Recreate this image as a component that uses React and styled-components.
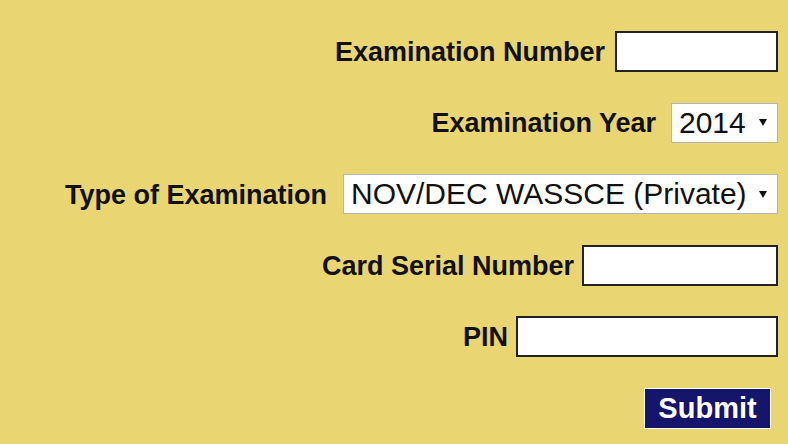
import React from "react";
import styled, { createGlobalStyle } from "styled-components";

const Global = createGlobalStyle`
  html, body { margin: 0; padding: 0; background: #e9d673; }
  body { font-family: "Liberation Sans", Arial, sans-serif; }
`;

const Page = styled.form`
  width: 788px;
  height: 444px;
  box-sizing: border-box;
  padding: 16px 10px 0 0;
  display: flex;
  flex-direction: column;
  align-items: flex-end;
`;

const Row = styled.div`
  height: 72px;
  display: flex;
  align-items: center;
  gap: ${(p) => p.$gap}px;
`;

const Label = styled.label`
  font-size: 27px;
  font-weight: bold;
  color: #111;
  padding-top: 2px;
`;

const TextBox = styled.input`
  box-sizing: border-box;
  width: ${(p) => p.$w}px;
  height: 41px;
  border: 2px solid #222;
  background: #fff;
  margin: 0;
  padding: 0 6px;
  font-size: 24px;
  font-family: "Liberation Sans", Arial, sans-serif;
`;

const SelectBox = styled.div`
  box-sizing: border-box;
  width: ${(p) => p.$w}px;
  height: 40px;
  border: 1px solid #b5b5b5;
  background: #fff;
  display: flex;
  align-items: center;
  justify-content: space-between;
  padding: 0 10px 0 7px;
  font-size: 30px;
  color: #111;
`;

const Arrow = styled.span`
  width: 0;
  height: 0;
  border-left: 4px solid transparent;
  border-right: 4px solid transparent;
  border-top: 7px solid #111;
`;

const SubmitRow = styled.div`
  height: 72px;
  display: flex;
  align-items: center;
  padding-right: 7px;
`;

const Submit = styled.button`
  box-sizing: border-box;
  width: 127px;
  height: 41px;
  background: #15156b;
  color: #fff;
  border: 1px solid #fff;
  font-family: "Liberation Sans", Arial, sans-serif;
  font-weight: bold;
  font-size: 29px;
  padding: 0;
  cursor: pointer;
`;

export default function App() {
  return (
    <>
      <Global />
      <Page onSubmit={(e) => e.preventDefault()}>
        <Row $gap={10}>
          <Label>Examination Number</Label>
          <TextBox $w={163} />
        </Row>
        <Row $gap={15}>
          <Label>Examination Year</Label>
          <SelectBox $w={107}>
            <span>2014</span>
            <Arrow />
          </SelectBox>
        </Row>
        <Row $gap={16}>
          <Label>Type of Examination</Label>
          <SelectBox $w={435}>
            <span>NOV/DEC WASSCE (Private)</span>
            <Arrow />
          </SelectBox>
        </Row>
        <Row $gap={8}>
          <Label>Card Serial Number</Label>
          <TextBox $w={196} />
        </Row>
        <Row $gap={8}>
          <Label>PIN</Label>
          <TextBox $w={262} />
        </Row>
        <SubmitRow>
          <Submit type="submit">Submit</Submit>
        </SubmitRow>
      </Page>
    </>
  );
}
